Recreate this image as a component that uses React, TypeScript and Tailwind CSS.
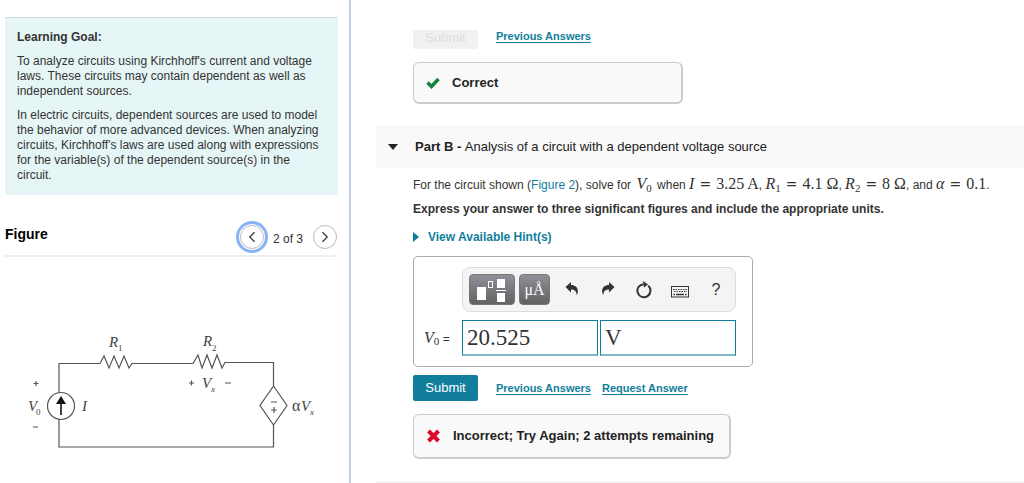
import React from 'react';
import { ChevronLeft, ChevronRight } from 'lucide-react';

const textLink = 'text-[11px] leading-3 font-bold text-[#117e9c] underline underline-offset-2';

interface MathVarProps {
  name: string;
  sub?: string;
}

function MathVar({ name, sub }: MathVarProps) {
  return (
    <span>
      <i>{name}</i>
      {sub && <sub className="text-[11px]">{sub}</sub>}
    </span>
  );
}

interface EquationProps extends MathVarProps {
  value: string;
}

function Equation({ name, sub, value }: EquationProps) {
  return (
    <span className="whitespace-nowrap font-['Liberation_Serif',serif] text-base leading-none">
      <MathVar name={name} sub={sub} />
      <span className="mx-[5px] font-['DejaVu_Serif',serif] text-sm leading-none">=</span>
      {value}
    </span>
  );
}

function LearningGoal() {
  return (
    <section className="mt-[17px] mr-[11px] ml-[5px] border-t border-[#d3dede] bg-[#e6f6f6] px-3 pt-3 pb-3 text-xs leading-[15px] text-[#333]">
      <h2 className="mb-[9px] font-bold">Learning Goal:</h2>
      <p className="mb-[9px]">
        To analyze circuits using Kirchhoff's current and voltage laws. These circuits may contain dependent as well as
        independent sources.
      </p>
      <p>
        In electric circuits, dependent sources are used to model the behavior of more advanced devices. When analyzing
        circuits, Kirchhoff's laws are used along with expressions for the variable(s) of the dependent source(s) in the
        circuit.
      </p>
    </section>
  );
}

function CircuitDiagram() {
  return (
    <svg
      viewBox="0 0 310 130"
      className="mt-[68px] ml-5 h-[130px] w-[310px]"
      role="img"
      aria-label="Circuit diagram"
      fontFamily="'Liberation Serif', serif"
      fill="#444"
    >
      <g fill="none" stroke="#555" strokeWidth="1.2">
        {/* Wires and resistors */}
        <path d="M39 68V38.500H80L84 31L89 43L94 31L99 43L104 31L109 43L112 38.500H173L178 30L182 43L187 30L192 43L197 30L202 43L205 37.500H253.500V61" />
        <path d="M39 94V122H253.500V100" />
        {/* Current source */}
        <circle cx="41" cy="81" r="13.500" />
        {/* Dependent source */}
        <path d="M253.500 61L267 80.500L253.500 100L240 80.500Z" />
        <path d="M41 90V77" stroke="#111" strokeWidth="1.600" />
        <path d="M251 77H257M251 85H257M254 82V88" />
        <path d="M13.500 58.500H18.500M16 56V61M13 102H18M169 58H174M171.500 55.500V60.500M205 58H211" />
      </g>
      <path d="M36 79L41 71L46 79Z" fill="#111" />
      <g fontSize="15" fontStyle="italic">
        <text x="89" y="22">R</text>
        <text x="183" y="21">R</text>
        <text x="182" y="63">V</text>
        <text x="8" y="86">V</text>
        <text x="62" y="86">I</text>
        <text x="281" y="86">V</text>
      </g>
      <text x="272" y="86" fontSize="16">α</text>
      <g fontSize="9">
        <text x="98" y="26">1</text>
        <text x="192" y="26">2</text>
        <text x="16" y="90">0</text>
        <text x="191" y="67" fontStyle="italic">x</text>
        <text x="290" y="90" fontStyle="italic">x</text>
      </g>
    </svg>
  );
}

function FigurePanel() {
  return (
    <section>
      <div className="mt-[27px] mr-3 ml-[5px] flex h-[35px] items-start justify-between border-b-2 border-[#eee]">
        <h2 className="pt-[2px] text-sm font-bold text-black">Figure</h2>
        <div className="flex items-center pt-[3px] text-xs text-[#333]">
          <button
            aria-label="Previous figure"
            className="mr-[9px] flex size-6 items-center justify-center rounded-full border border-[#bbb] outline-3 outline-offset-1 outline-[#86b2f8]"
          >
            <ChevronLeft size={18} strokeWidth={1.5} />
          </button>
          <span className="pt-1">2 of 3</span>
          <button
            aria-label="Next figure"
            className="ml-[10px] flex size-6 items-center justify-center rounded-full border border-[#bbb]"
          >
            <ChevronRight size={18} strokeWidth={1.5} />
          </button>
        </div>
      </div>
      <CircuitDiagram />
    </section>
  );
}

function Toolbar() {
  const keyClass =
    'flex h-[31px] items-center justify-center rounded-[4px] border border-[#777] bg-linear-to-b from-[#928f99] to-[#626262] text-white';
  const toolClass = 'flex w-9 items-center justify-center';
  return (
    <div className="flex h-[45px] items-center rounded-lg border border-[#ddd] bg-[#f4f4f4] pl-[6px] text-[#333]">
      <button aria-label="Templates" className={`${keyClass} mr-1 w-[46px]`}>
        <svg width="32" height="26" viewBox="0 0 32 26" fill="currentColor">
          <rect x="1" y="10" width="9" height="13" />
          <rect x="12.500" y="4.500" width="4" height="6" fill="none" stroke="currentColor" />
          <rect x="21" y="2" width="8" height="9" />
          <rect x="20" y="13" width="10" height="1" />
          <rect x="21" y="16" width="8" height="9" />
        </svg>
      </button>
      <button aria-label="Units" className={`${keyClass} w-[31px] font-['Liberation_Serif',serif] text-base`}>
        μÅ
      </button>
      <div className="flex flex-1 items-center pl-1">
        <button aria-label="Undo" className={toolClass}>
          <svg width="14" height="15" viewBox="0 0 14 15" fill="currentColor">
            <path d="M0.500 5L6 0V3C11.500 3 15 7.500 11.500 13.500C12 9.500 10 7.500 6 7.500V10.500Z" />
          </svg>
        </button>
        <button aria-label="Redo" className={toolClass}>
          <svg width="14" height="15" viewBox="0 0 14 15" fill="currentColor">
            <path d="M13.500 5L8 0V3C2.500 3 -1 7.500 2.500 13.500C2 9.500 4 7.500 8 7.500V10.500Z" />
          </svg>
        </button>
        <button aria-label="Reset" className={toolClass}>
          <svg width="16" height="18" viewBox="0 0 16 18">
            <path d="M12.200 4.800A6.500 6.500 0 1 1 7.500 3.200" fill="none" stroke="currentColor" strokeWidth="2" />
            <path d="M7 0L12 3.500L8 6.500Z" fill="currentColor" />
          </svg>
        </button>
        <button aria-label="Keyboard shortcuts" className={`${toolClass} pt-1`}>
          <svg width="18" height="12" viewBox="0 0 18 12" fill="none" stroke="currentColor">
            <rect x="0.500" y="0.500" width="17" height="10.500" />
            <path d="M2 3.500H16M3 5.500H16" strokeDasharray="1.500 1" />
            <path d="M2.500 8.500H4M5 8.500H13M14 8.500H15.500" strokeWidth="1.500" />
          </svg>
        </button>
        <button aria-label="Help" className={`${toolClass} text-base`}>
          ?
        </button>
      </div>
    </div>
  );
}

function AnswerBox() {
  const inputClass =
    "h-9 w-[136px] border border-b-2 border-[#117e9c] border-b-[#7fb9c9] bg-white px-1 font-['Liberation_Serif',serif] text-[23px] text-[#333]";
  return (
    <div className="mt-[11px] grid w-[340px] grid-cols-[38px_274px] gap-x-[10px] gap-y-2 rounded-[5px] border border-[#aaa] pt-[10px] pb-[10px] text-[#333]">
      <div className="col-start-2">
        <Toolbar />
      </div>
      <label htmlFor="answer" className="self-center pl-[10px] text-xs whitespace-nowrap">
        <span className="font-['Liberation_Serif',serif] text-base leading-none">
          <MathVar name="V" sub="0" />
        </span>{' '}
        =
      </label>
      <div className="flex justify-between">
        <input id="answer" defaultValue="20.525" className={inputClass} />
        <input aria-label="Units" defaultValue="V" className={inputClass} />
      </div>
    </div>
  );
}

interface FeedbackProps {
  icon: React.ReactNode;
  children: React.ReactNode;
  className: string;
}

function Feedback({ icon, children, className }: FeedbackProps) {
  return (
    <div
      className={`mt-[13px] flex items-center gap-3 rounded-md border border-r-2 border-b-2 border-[#ccc] bg-[#f9f9f9] px-3 text-[13px] font-bold text-[#222] ${className}`}
    >
      {icon}
      {children}
    </div>
  );
}

function CheckIcon() {
  return (
    <svg width="14" height="12" viewBox="0 0 14 12" className="text-[#10833c]">
      <path d="M1.500 5.500L5.500 9.500L12.500 2" fill="none" stroke="currentColor" strokeWidth="3.400" />
    </svg>
  );
}

function CrossIcon() {
  return (
    <svg width="15" height="14" viewBox="0 0 15 14" className="text-[#dc0d2c]">
      <path d="M2.500 2L12.500 12M12.500 2L2.500 12" fill="none" stroke="currentColor" strokeWidth="4" />
    </svg>
  );
}

function PartB() {
  return (
    <section>
      <h2 className="mt-[21px] flex h-[43px] items-center bg-[#f9f9f9] pl-3 text-[13px] text-[#222]">
        <svg width="10" height="6" viewBox="0 0 10 6" className="mr-[17px]">
          <path d="M0 0H10L5 6Z" fill="#222" />
        </svg>
        <span>
          <b>Part B - </b>
          Analysis of a circuit with a dependent voltage source
        </span>
      </h2>
      <div className="pl-[37px] text-xs text-[#333]">
        <p className="mt-[7px] leading-5 whitespace-nowrap">
          For the circuit shown (
          <a href="#figure" className="text-[#117e9c]">
            Figure 2
          </a>
          ), solve for{' '}
          <span className="mx-[2px] font-['Liberation_Serif',serif] text-base leading-none">
            <MathVar name="V" sub="0" />
          </span>{' '}
          when <Equation name="I" value="3.25 A" />, <Equation name="R" sub="1" value="4.1 Ω" />,{' '}
          <Equation name="R" sub="2" value="8 Ω" />, and <Equation name="α" value="0.1" />.
        </p>
        <p className="mt-1 leading-5 font-bold">
          Express your answer to three significant figures and include the appropriate units.
        </p>
        <button className="mt-[10px] flex items-center font-bold text-[#117e9c]">
          <svg width="6" height="10" viewBox="0 0 6 10" className="mr-[9px]">
            <path d="M0 0L6 5L0 10Z" fill="currentColor" />
          </svg>
          View Available Hint(s)
        </button>
        <AnswerBox />
        <div className="mt-2 flex items-center">
          <button className="mr-[18px] h-[26px] w-[65px] rounded-xs bg-[#117e9c] text-[13px] text-white">Submit</button>
          <a href="#previous" className={`${textLink} mr-[11px]`}>
            Previous Answers
          </a>
          <a href="#request" className={textLink}>
            Request Answer
          </a>
        </div>
        <Feedback icon={<CrossIcon />} className="h-[45px] w-[318px]">
          Incorrect; Try Again; 2 attempts remaining
        </Feedback>
      </div>
    </section>
  );
}

export default function App() {
  return (
    <div className="flex min-h-screen bg-white font-['Liberation_Sans',Arial,sans-serif]">
      <aside className="w-[351px] shrink-0 border-r-2 border-[#c3cfe3]">
        <LearningGoal />
        <FigurePanel />
      </aside>
      <main className="min-w-0 flex-1 pt-[30px] pl-[25px]">
        <div className="flex h-[19px] items-start pl-[37px]">
          <button
            disabled
            className="mr-[18px] h-[19px] w-[65px] rounded-b-xs bg-[#f1f1f1] pb-1 text-[13px] leading-none text-[#ddd]"
          >
            Submit
          </button>
          <a href="#previous" className={textLink}>
            Previous Answers
          </a>
        </div>
        <div className="pl-[37px]">
          <Feedback icon={<CheckIcon />} className="h-[42px] w-[270px]">
            Correct
          </Feedback>
        </div>
        <PartB />
        <hr className="mt-[22px] border-t-2 border-[#f5f5f5]" />
      </main>
    </div>
  );
}
